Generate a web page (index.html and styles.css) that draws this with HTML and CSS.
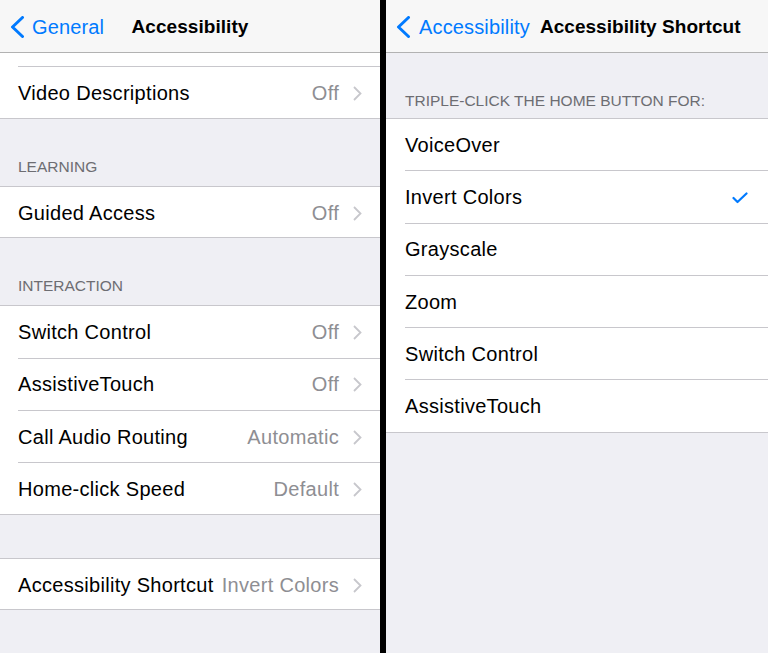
FILE: index.html
```html
<!DOCTYPE html>
<html lang="en">
<head>
<meta charset="utf-8">
<title>Accessibility</title>
<link rel="stylesheet" href="styles.css">
</head>
<body>
<div class="screens">
  <section class="screen">
    <header class="nav nav--centered">
      <a class="back">
        <svg class="back-chev" width="15" height="22" viewBox="0 0 15 22"><polyline points="12.5,1.5 2.5,11 12.5,20.5" fill="none" stroke="#007aff" stroke-width="3" stroke-linecap="round" stroke-linejoin="round"/></svg>
        <span>General</span>
      </a>
      <h1 class="title">Accessibility</h1>
      <span></span>
    </header>
    <ul class="group group--first">
      <li class="stub"></li>
      <li class="row"><span class="label">Video Descriptions</span><span class="value">Off</span><svg class="chev" width="9" height="15" viewBox="0 0 9 15"><polyline points="1,1 7.5,7.5 1,14" fill="none" stroke="#c7c7cc" stroke-width="1.8"/></svg></li>
    </ul>
    <div class="section-header">Learning</div>
    <ul class="group group--single">
      <li class="row"><span class="label">Guided Access</span><span class="value">Off</span><svg class="chev" width="9" height="15" viewBox="0 0 9 15"><polyline points="1,1 7.5,7.5 1,14" fill="none" stroke="#c7c7cc" stroke-width="1.8"/></svg></li>
    </ul>
    <div class="section-header">Interaction</div>
    <ul class="group">
      <li class="row"><span class="label">Switch Control</span><span class="value">Off</span><svg class="chev" width="9" height="15" viewBox="0 0 9 15"><polyline points="1,1 7.5,7.5 1,14" fill="none" stroke="#c7c7cc" stroke-width="1.8"/></svg></li>
      <li class="row"><span class="label">AssistiveTouch</span><span class="value">Off</span><svg class="chev" width="9" height="15" viewBox="0 0 9 15"><polyline points="1,1 7.5,7.5 1,14" fill="none" stroke="#c7c7cc" stroke-width="1.8"/></svg></li>
      <li class="row"><span class="label">Call Audio Routing</span><span class="value">Automatic</span><svg class="chev" width="9" height="15" viewBox="0 0 9 15"><polyline points="1,1 7.5,7.5 1,14" fill="none" stroke="#c7c7cc" stroke-width="1.8"/></svg></li>
      <li class="row"><span class="label">Home-click Speed</span><span class="value">Default</span><svg class="chev" width="9" height="15" viewBox="0 0 9 15"><polyline points="1,1 7.5,7.5 1,14" fill="none" stroke="#c7c7cc" stroke-width="1.8"/></svg></li>
    </ul>
    <ul class="group group--single group--spaced">
      <li class="row"><span class="label">Accessibility Shortcut</span><span class="value">Invert Colors</span><svg class="chev" width="9" height="15" viewBox="0 0 9 15"><polyline points="1,1 7.5,7.5 1,14" fill="none" stroke="#c7c7cc" stroke-width="1.8"/></svg></li>
    </ul>
  </section>

  <section class="screen">
    <header class="nav nav--flow">
      <a class="back">
        <svg class="back-chev" width="15" height="22" viewBox="0 0 15 22"><polyline points="12.5,1.5 2.5,11 12.5,20.5" fill="none" stroke="#007aff" stroke-width="3" stroke-linecap="round" stroke-linejoin="round"/></svg>
        <span>Accessibility</span>
      </a>
      <h1 class="title">Accessibility Shortcut</h1>
    </header>
    <div class="section-header section-header--tight">Triple-click the Home button for:</div>
    <ul class="group group--right">
      <li class="row"><span class="label">VoiceOver</span></li>
      <li class="row"><span class="label">Invert Colors</span><svg class="check" width="16" height="12" viewBox="0 0 16 12"><polyline points="1.5,6 5.5,10 14.5,1.5" fill="none" stroke="#007aff" stroke-width="2.2" stroke-linecap="round" stroke-linejoin="round"/></svg></li>
      <li class="row"><span class="label">Grayscale</span></li>
      <li class="row"><span class="label">Zoom</span></li>
      <li class="row"><span class="label">Switch Control</span></li>
      <li class="row"><span class="label">AssistiveTouch</span></li>
    </ul>
  </section>
</div>
</body>
</html>
```

FILE: styles.css
```css
* { box-sizing: border-box; }

html, body {
  margin: 0;
  padding: 0;
  background: #000;
}

body {
  font-family: "Liberation Sans", Arial, sans-serif;
  color: #000;
}

.screens {
  display: grid;
  grid-template-columns: 380px 382px;
  column-gap: 6px;
  height: 653px;
  overflow: hidden;
}

.screen {
  background: #efeff4;
  overflow: hidden;
  min-width: 0;
}

.nav {
  height: 53px;
  padding-top: 2px;
  background: #f7f7f7;
  border-bottom: 1px solid #b2b2b2;
  align-items: center;
}

.nav--centered {
  display: grid;
  grid-template-columns: 1fr auto 1fr;
}

.nav--flow {
  display: flex;
  gap: 10px;
}

.back {
  display: flex;
  align-items: center;
  gap: 7px;
  padding-left: 10px;
  color: #007aff;
  font-size: 20px;
  letter-spacing: 0.15px;
  white-space: nowrap;
}

.nav--flow .back {
  gap: 8px;
}

.back-chev {
  display: block;
  flex: none;
}

.title {
  margin: 0;
  font-size: 19px;
  font-weight: 700;
  letter-spacing: 0.05px;
  white-space: nowrap;
}

.group {
  list-style: none;
  margin: 0;
  padding: 0;
  background: #fff;
  border-top: 1px solid #c8c7cc;
  border-bottom: 1px solid #c8c7cc;
}

.group--first {
  border-top: 0;
}

.group--spaced {
  margin-top: 43px;
}

.stub {
  height: 13px;
}

.row {
  display: flex;
  align-items: center;
  height: 49.75px;
  padding-top: 1.5px;
  box-sizing: content-box;
  margin-left: 18px;
  padding-right: 18px;
  font-size: 20px;
  letter-spacing: 0.3px;
  white-space: nowrap;
}

.group--single .row {
  height: 48.5px;
}

.row + .row,
.stub + .row {
  border-top: 1px solid #c8c7cc;
}

.group--right .row {
  margin-left: 19px;
  padding-right: 20px;
}

.value {
  margin-left: auto;
  padding-left: 8px;
  color: #8e8e93;
}

.chev {
  display: block;
  flex: none;
  margin-left: 14px;
}

.check {
  display: block;
  margin-left: auto;
}

.section-header {
  padding: 39px 18px 10px;
  font-size: 15.5px;
  line-height: 18px;
  color: #6d6d72;
  text-transform: uppercase;
}

.section-header--tight {
  padding: 39px 19px 8px;
}
```
